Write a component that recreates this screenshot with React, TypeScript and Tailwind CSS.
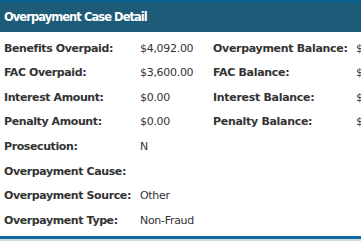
export default function App() {
  const rows: [string, string, string?, string?][] = [
    ["Benefits Overpaid:", "$4,092.00", "Overpayment Balance:", "$"],
    ["FAC Overpaid:", "$3,600.00", "FAC Balance:", "$"],
    ["Interest Amount:", "$0.00", "Interest Balance:", "$"],
    ["Penalty Amount:", "$0.00", "Penalty Balance:", "$"],
    ["Prosecution:", "N"],
    ["Overpayment Cause:", ""],
    ["Overpayment Source:", "Other"],
    ["Overpayment Type:", "Non-Fraud"],
  ];
  return (
    <div className="w-[361px] h-[241px] overflow-hidden bg-white font-['DejaVu_Sans',Verdana,sans-serif]">
      <div className="h-[3px] bg-[#0d5f8e]" />
      <div className="h-[29px] bg-[#1d5b79] flex items-center pl-[4px] text-white font-bold text-[11.5px] tracking-[-0.95px]">
        Overpayment Case Detail
      </div>
      <div className="pt-[4.5px] h-[204px]">
        {rows.map(([l1, v1, l2, v2]) => (
          <div key={l1} className="h-[24.6px] flex items-center text-[11px] text-[#333] whitespace-nowrap">
            <div className="w-[140px] pl-[4px] font-bold tracking-[-0.4px] shrink-0">{l1}</div>
            <div className="w-[73px] tracking-[-0.3px] shrink-0">{v1}</div>
            {l2 && <div className="w-[143px] font-bold tracking-[-0.3px] shrink-0">{l2}</div>}
            {v2 && <div className="shrink-0">{v2}</div>}
          </div>
        ))}
      </div>
      <div className="h-[3px] bg-[#0e6a9e]" />
      <div className="h-[2px] bg-[#cddde6]" />
    </div>
  );
}
